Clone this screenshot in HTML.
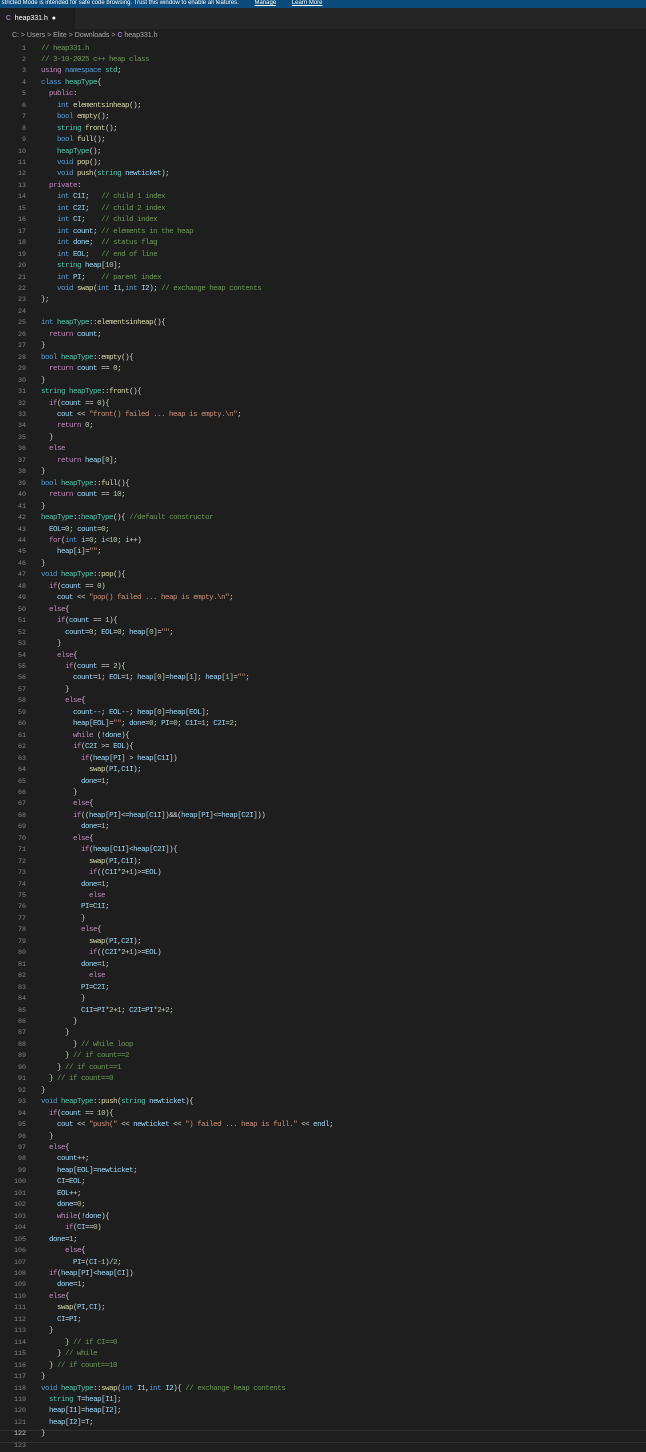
<!DOCTYPE html>
<html><head><meta charset="utf-8"><style>
body{margin:0;width:646px;height:1450px;background:#1e1e1e;overflow:hidden;font-family:"Liberation Sans",sans-serif;position:relative}
#bar{position:absolute;left:0;top:0;width:646px;height:8px;background:#0b4c7d;color:#fff;font-size:6px;line-height:7px;white-space:nowrap;overflow:hidden}
#bar u{margin-left:14px}
#tabs{position:absolute;left:0;top:8px;width:646px;height:21px;background:#252526}
#tab{position:absolute;left:0;top:0;width:75px;height:21px;background:#1e1e1e;color:#fff;font-size:7px;line-height:21px}
#bc{position:absolute;left:10px;top:31px;color:#a9a9a9;font-size:7px;line-height:10px;white-space:nowrap}
.c{color:#a074c4;font-weight:bold}
#nums{position:absolute;left:0;top:43.5px;width:26px;text-align:right;color:#858585;font:6.7px/11.46px "Liberation Mono",monospace}
#code{position:absolute;left:41px;top:43.5px;margin:0;color:#d4d4d4;font:7.5px/11.46px "Liberation Mono",monospace;letter-spacing:-0.5px;white-space:pre}
#cur{position:absolute;left:0;top:1430px;width:646px;height:11px;border-top:1px solid #303030;border-bottom:1px solid #303030}
.k{color:#c586c0}.t{color:#569cd6}.v{color:#9cdcfe}.f{color:#dcdcaa}.g{color:#6a9955}.s{color:#ce9178}.n{color:#b5cea8}.cl{color:#4ec9b0}
</style></head><body>
<div id="bar">&nbsp;stricted Mode is intended for safe code browsing. Trust this window to enable all features. <u>Manage</u> <u>Learn More</u></div>
<div id="tabs"><div id="tab">&nbsp;&nbsp;&nbsp;<span class="c">C</span>&nbsp; heap331.h &nbsp;●</div></div>
<div id="bc">&nbsp;C: &gt; Users &gt; Elite &gt; Downloads &gt; <span class="c">C</span> heap331.h</div>
<div id="cur"></div>
<div id="nums"></div>
<pre id="code">// heap331.h
// 3-10-2025 c++ heap class
using namespace std;
class heapType{
  public:
    int elementsinheap();
    bool empty();
    string front();
    bool full();
    heapType();
    void pop();
    void push(string newticket);
  private:
    int C1I;   // child 1 index
    int C2I;   // child 2 index
    int CI;    // child index
    int count; // elements in the heap
    int done;  // status flag
    int EOL;   // end of line
    string heap[10];
    int PI;    // parent index
    void swap(int I1,int I2); // exchange heap contents
};

int heapType::elementsinheap(){
  return count;
}
bool heapType::empty(){
  return count == 0;
}
string heapType::front(){
  if(count == 0){
    cout &lt;&lt; "front() failed ... heap is empty.\n";
    return 0;
  }
  else
    return heap[0];
}
bool heapType::full(){
  return count == 10;
}
heapType::heapType(){ //default constructor
  EOL=0; count=0;
  for(int i=0; i&lt;10; i++)
    heap[i]="";
}
void heapType::pop(){
  if(count == 0)
    cout &lt;&lt; "pop() failed ... heap is empty.\n";
  else{
    if(count == 1){
      count=0; EOL=0; heap[0]="";
    }
    else{
      if(count == 2){
        count=1; EOL=1; heap[0]=heap[1]; heap[1]="";
      }
      else{
        count--; EOL--; heap[0]=heap[EOL];
        heap[EOL]=""; done=0; PI=0; C1I=1; C2I=2;
        while (!done){
        if(C2I &gt;= EOL){
          if(heap[PI] &gt; heap[C1I])
            swap(PI,C1I);
          done=1;
        }
        else{
        if((heap[PI]&lt;=heap[C1I])&amp;&amp;(heap[PI]&lt;=heap[C2I]))
          done=1;
        else{
          if(heap[C1I]&lt;heap[C2I]){
            swap(PI,C1I);
            if((C1I*2+1)&gt;=EOL)
          done=1;
            else
          PI=C1I;
          }
          else{
            swap(PI,C2I);
            if((C2I*2+1)&gt;=EOL)
          done=1;
            else
          PI=C2I;
          }
          C1I=PI*2+1; C2I=PI*2+2;
        }
      }
        } // while loop
      } // if count==2
    } // if count==1
  } // if count==0
}
void heapType::push(string newticket){
  if(count == 10){
    cout &lt;&lt; "push(" &lt;&lt; newticket &lt;&lt; ") failed ... heap is full." &lt;&lt; endl;
  }
  else{
    count++;
    heap[EOL]=newticket;
    CI=EOL;
    EOL++;
    done=0;
    while(!done){
      if(CI==0)
  done=1;
      else{
        PI=(CI-1)/2;
  if(heap[PI]&lt;heap[CI])
    done=1;
  else{
    swap(PI,CI);
    CI=PI;
  }
      } // if CI==0
    } // while
  } // if count==10
}
void heapType::swap(int I1,int I2){ // exchange heap contents
  string T=heap[I1];
  heap[I1]=heap[I2];
  heap[I2]=T;
}
</pre>
<script>
var pre=document.getElementById('code');
var lines=pre.textContent.split('\n');
var n='';for(var i=1;i<=123;i++)n+=(i==122?'<span style="color:#ccc">'+i+'</span>':i)+'<br>';
document.getElementById('nums').innerHTML=n;
function esc(s){return s.replace(/&/g,'&amp;').replace(/</g,'&lt;').replace(/>/g,'&gt;');}
var kw={using:'k',namespace:'t',class:'t',public:'k',private:'k',int:'t',bool:'t',void:'t',string:'cl',return:'k',if:'k',else:'k',for:'k',while:'k',heapType:'cl',std:'cl',cout:'v',endl:'v'};
var out=lines.map(function(l){
  var ci=l.indexOf('//'),code=l,com='';
  if(ci>=0){code=l.slice(0,ci);com=l.slice(ci);}
  var r='';var re=/("[^"]*")|([A-Za-z_]\w*)(\s*\()?|(\d+)|([\s\S])/g,m;
  while((m=re.exec(code))){
    if(m[1])r+='<span class="s">'+esc(m[1])+'</span>';
    else if(m[2]){var w=m[2];var c=kw[w];if(!c)c=m[3]?'f':'v';r+='<span class="'+c+'">'+w+'</span>'+(m[3]?esc(m[3]):'');}
    else if(m[4])r+='<span class="n">'+m[4]+'</span>';
    else r+=esc(m[5]);
  }
  if(com)r+='<span class="g">'+esc(com)+'</span>';
  return r;
});
pre.innerHTML=out.join('\n');
</script>
</body></html>
